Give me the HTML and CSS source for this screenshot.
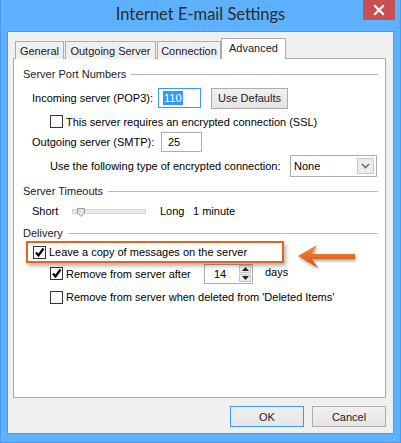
FILE: index.html
```html
<!DOCTYPE html>
<html>
<head>
<meta charset="utf-8">
<link rel="stylesheet" href="styles.css">
</head>
<body>
<div class="window">
  <div class="titlebar">
    <div class="title">Internet E-mail Settings</div>
    <div class="close"><svg width="12" height="12" viewBox="0 0 12 12"><path d="M2 2 L10 10 M10 2 L2 10" stroke="#fff" stroke-width="2.2" stroke-linecap="square"/></svg></div>
  </div>
  <div class="client">
    <div class="tabs">
      <div class="tab w-general">General</div>
      <div class="tab w-outgoing">Outgoing Server</div>
      <div class="tab w-connection">Connection</div>
      <div class="tab active w-advanced">Advanced</div>
    </div>
    <div class="panel">
      <div class="legend l-ports"><span>Server Port Numbers</span><i></i></div>
      <div class="row r-incoming">
        <span class="lbl w-in">Incoming server (POP3):</span>
        <div class="textbox focus w-inbox"><span class="sel">110</span></div>
        <div class="btn w-defaults">Use Defaults</div>
      </div>
      <div class="row r-ssl indent">
        <span class="cb"></span><span class="cbtext">This server requires an encrypted connection (SSL)</span>
      </div>
      <div class="row r-outgoing">
        <span class="lbl w-out">Outgoing server (SMTP):</span>
        <div class="textbox w-outbox">25</div>
      </div>
      <div class="row r-enc indent">
        <span class="w-enc">Use the following type of encrypted connection:</span>
        <div class="select"><span>None</span><span class="drop"><svg width="9" height="6" viewBox="0 0 9 6"><path d="M1 1 L4.5 4.5 L8 1" fill="none" stroke="#6d6d6d" stroke-width="1.6"/></svg></span></div>
      </div>
      <div class="legend l-timeouts"><span>Server Timeouts</span><i></i></div>
      <div class="row r-slider">
        <span class="w-short">Short</span>
        <div class="track"><svg class="thumb" width="8" height="9" viewBox="0 0 8 9"><path d="M0.5 0.5 H7.5 V5 L4 8.5 L0.5 5 Z" fill="#e3e3e3" stroke="#9a9a9a"/></svg></div>
        <span class="w-long">Long</span>
        <span>1 minute</span>
      </div>
      <div class="legend l-delivery"><span>Delivery</span><i></i></div>
      <div class="row r-leave">
        <div class="highlight">
          <span class="cb checked"><svg width="11" height="11" viewBox="0 0 11 11"><path d="M2 5.5 L4.5 8.5 L9.5 1.5" fill="none" stroke="#000" stroke-width="2.2"/></svg></span><span class="cbtext">Leave a copy of messages on the server</span>
        </div>
        <svg class="arrow" width="62" height="30" viewBox="0 0 62 30">
          <defs>
            <filter id="sh" x="-20%" y="-30%" width="140%" height="170%"><feDropShadow dx="1" dy="2" stdDeviation="1.4" flood-color="#000" flood-opacity="0.35"/></filter>
            <linearGradient id="og" x1="0" y1="0" x2="0" y2="1"><stop offset="0" stop-color="#f08a3c"/><stop offset="1" stop-color="#d4540f"/></linearGradient>
          </defs>
          <path d="M2 15 L21 4 L16 13 L59 13 L59 18 L16 18 L22 27 Z" fill="url(#og)" filter="url(#sh)"/>
        </svg>
      </div>
      <div class="row r-after indent">
        <div class="w-after"><span class="cb checked"><svg width="11" height="11" viewBox="0 0 11 11"><path d="M2 5.5 L4.5 8.5 L9.5 1.5" fill="none" stroke="#000" stroke-width="2.2"/></svg></span><span class="cbtext">Remove from server after</span></div>
        <div class="spinner"><span class="spinval">14</span><span class="spinbtns"><span class="sb"><svg width="7" height="4" viewBox="0 0 7 4"><path d="M0 4 L3.5 0 L7 4 Z" fill="#222"/></svg></span><span class="sb"><svg width="7" height="4" viewBox="0 0 7 4"><path d="M0 0 L3.5 4 L7 0 Z" fill="#222"/></svg></span></span></div>
        <span class="days">days</span>
      </div>
      <div class="row r-deleted indent">
        <span class="cb"></span><span class="cbtext">Remove from server when deleted from 'Deleted Items'</span>
      </div>
    </div>
    <div class="footer">
      <div class="btn ok">OK</div>
      <div class="btn cancel">Cancel</div>
    </div>
  </div>
</div>
</body>
</html>
```

FILE: styles.css
```css
* { box-sizing: border-box; }
html, body { margin: 0; padding: 0; }
body {
  width: 401px;
  height: 443px;
  overflow: hidden;
  font-family: "Liberation Sans", Arial, sans-serif;
  font-size: 11px;
  color: #000;
}
.window {
  width: 401px;
  height: 443px;
  background: #5eb1fe;
  border: 1px solid #4f9ae6;
  border-top: none;
  display: flex;
  flex-direction: column;
}
.titlebar {
  height: 31px;
  display: grid;
  grid-template-columns: 1fr auto 1fr;
}
.title {
  grid-column: 2;
  font-family: Lato, "Liberation Sans", sans-serif;
  font-size: 16.5px;
  color: #2b2b2b;
  line-height: 29px;
  white-space: nowrap;
}
.close {
  grid-column: 3;
  justify-self: end;
  align-self: start;
  width: 32px;
  height: 20px;
  margin-right: 5px;
  background: #c75050;
  display: flex;
  align-items: center;
  justify-content: center;
}
.client {
  margin-left: 6px;
  width: 387px;
  height: 403px;
  background: #f0f0f0;
  border: 1px solid #5b94cf;
  padding: 6px 0 0 5px;
}
.tabs {
  display: flex;
  align-items: flex-end;
  height: 21px;
  margin-left: 2px;
  margin-bottom: -1px;
  position: relative;
  z-index: 1;
}
.tab {
  height: 18px;
  border: 1px solid #acacac;
  border-bottom: none;
  background: #f0f0f0;
  display: flex;
  align-items: center;
  justify-content: center;
  white-space: nowrap;
  color: #1a1a1a;
  padding-top: 1px;
}
.tab + .tab { margin-left: 1px; }
.tab.active {
  height: 21px;
  background: #fff;
  padding-top: 0;
  padding-bottom: 3px;
  margin-left: 0;
}
.w-general { width: 49px; }
.w-outgoing { width: 91px; }
.w-connection { width: 64px; }
.w-advanced { width: 65px; }
.panel {
  width: 373px;
  height: 340px;
  background: #fff;
  border: 1px solid #acacac;
  display: flex;
  flex-direction: column;
}
.legend {
  height: 16px;
  display: flex;
  align-items: center;
  margin-left: 9px;
  margin-right: 7px;
  color: #1a1a1a;
  white-space: nowrap;
}
.legend i {
  flex: 1;
  height: 1px;
  background: #b9b9b9;
  margin-left: 5px;
  margin-top: 1px;
}
.l-ports { margin-top: 7px; }
.l-timeouts { margin-top: 6px; }
.l-delivery { margin-top: 6px; }
.row {
  display: flex;
  align-items: center;
  padding-left: 18px;
  white-space: nowrap;
}
.row.indent { padding-left: 36px; }
.r-incoming { margin-top: 6px; height: 20px; }
.r-ssl { margin-top: 5px; height: 17px; }
.r-outgoing { margin-top: 1px; height: 21px; }
.r-enc { margin-top: 3px; height: 22px; }
.r-slider { margin-top: 4px; height: 16px; }
.r-leave { height: 22px; padding-left: 12px; align-items: flex-start; }
.r-after { height: 21px; }
.r-deleted { margin-top: 4px; height: 18px; }
.lbl { display: inline-block; }
.w-in { width: 126px; }
.w-out { width: 129px; }
.w-enc { width: 240px; }
.textbox {
  height: 20px;
  background: #fff;
  border: 1px solid #abadb3;
  display: flex;
  align-items: center;
  padding-left: 6px;
}
.textbox.focus { border-color: #3c99f0; padding-left: 4px; }
.w-inbox { width: 43px; }
.w-outbox { width: 41px; height: 20px; }
.sel {
  background: #3399ff;
  color: #fff;
  padding: 0 1px;
  line-height: 14px;
}
.btn {
  height: 21px;
  border: 1px solid #acacac;
  background: linear-gradient(#f0f0f0, #e5e5e5);
  display: flex;
  align-items: center;
  justify-content: center;
  color: #1a1a1a;
}
.w-defaults { width: 77px; margin-left: 10px; }
.cb {
  width: 13px;
  height: 13px;
  border: 1px solid #333;
  background: #fff;
  display: inline-flex;
  align-items: center;
  justify-content: center;
  flex: none;
}
.cbtext { margin-left: 3px; }
.select {
  width: 87px;
  height: 22px;
  border: 1px solid #acacac;
  background: #fff;
  display: flex;
  align-items: center;
  justify-content: space-between;
  padding: 0 2px 0 3px;
}
.drop {
  width: 17px;
  height: 16px;
  border: 1px solid #c9c9c9;
  background: #ececec;
  display: flex;
  align-items: center;
  justify-content: center;
}
.w-short { width: 40px; }
.track {
  width: 74px;
  height: 5px;
  background: #e7eaea;
  border: 1px solid #d6d6d6;
  display: flex;
  align-items: center;
  padding-left: 4px;
}
.thumb { margin-top: 3px; }
.w-long { width: 33px; margin-left: 14px; }
.highlight {
  width: 258px;
  height: 22px;
  border: 2px solid #e2661e;
  box-shadow: 2px 3px 4px rgba(0, 0, 0, 0.3);
  display: flex;
  align-items: center;
  padding-left: 5px;
  background: #fff;
  position: relative;
  z-index: 1;
}
.arrow { margin-left: 12px; margin-top: 0; flex: none; }
.w-after { width: 154px; display: flex; align-items: center; }
.spinner {
  width: 49px;
  height: 20px;
  border: 1px solid #abadb3;
  display: flex;
  align-items: center;
  justify-content: space-between;
  padding-left: 9px;
  padding-right: 1px;
}
.spinbtns {
  display: flex;
  flex-direction: column;
  gap: 1px;
}
.sb {
  width: 12px;
  height: 8px;
  border: 1px solid #c4c4c4;
  background: #ececec;
  display: flex;
  align-items: center;
  justify-content: center;
}
.days { margin-left: 12px; margin-top: -4px; }
.footer {
  display: flex;
  justify-content: flex-end;
  gap: 8px;
  margin-top: 8px;
  margin-right: 7px;
}
.ok, .cancel { width: 74px; height: 21px; }
.ok { border-color: #3c99f0; }
```
